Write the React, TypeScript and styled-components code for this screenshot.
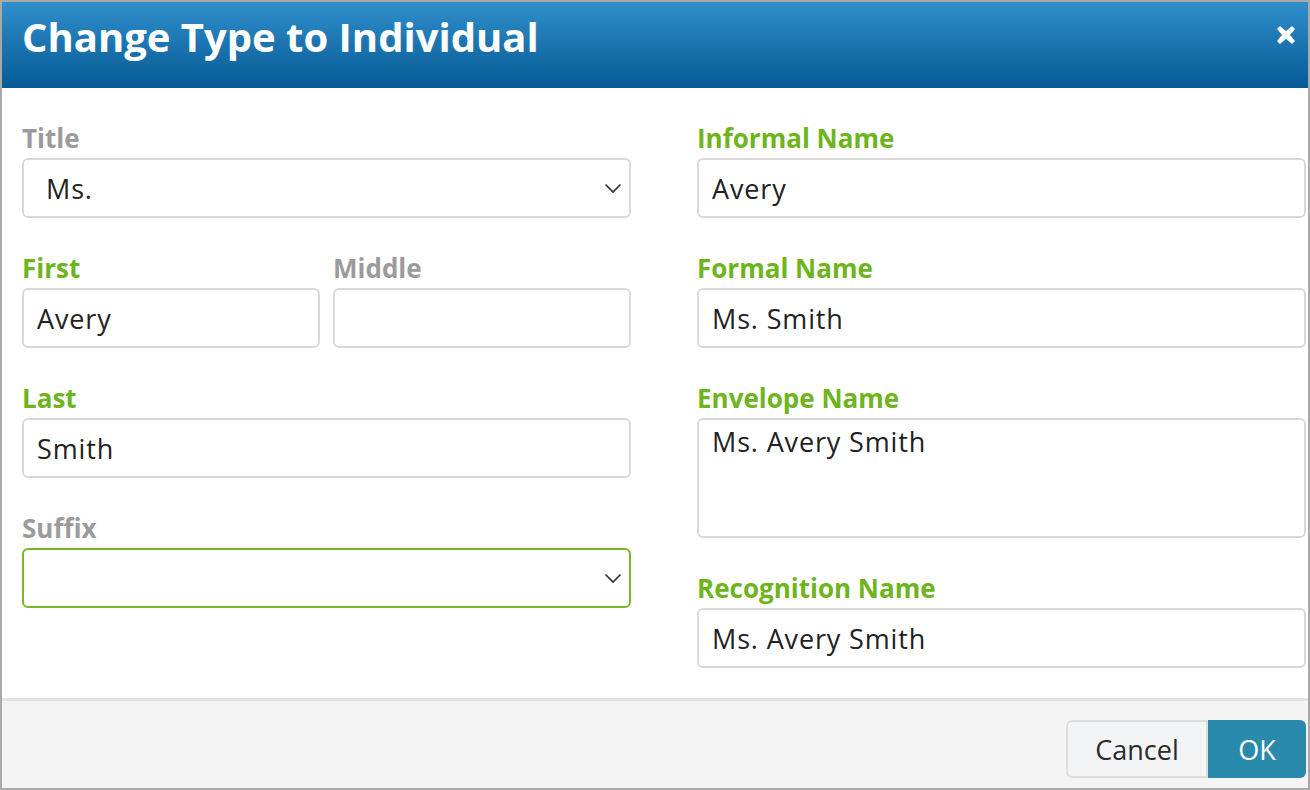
import React from "react";
import styled, { createGlobalStyle } from "styled-components";

const Global = createGlobalStyle`
  html, body { margin: 0; padding: 0; background: #ffffff; }
  body { font-family: "Open Sans", "Liberation Sans", sans-serif; }
  * { box-sizing: border-box; }
`;

const Dialog = styled.div`
  width: 1310px;
  height: 790px;
  border: 2px solid #a9a9a9;
  display: flex;
  flex-direction: column;
  background: #ffffff;
`;

const Header = styled.div`
  height: 86px;
  flex: 0 0 86px;
  padding: 8px 13px 0 20px;
  background: linear-gradient(to bottom, #2f8fcb 0%, #1b74b0 50%, #065b94 100%);
  display: flex;
  align-items: flex-start;
  justify-content: space-between;
`;

const Title = styled.h1`
  margin: 0;
  font-family: "Open Sans", "Liberation Sans", sans-serif;
  font-weight: 700;
  font-size: 40px;
  line-height: 54px;
  color: #ffffff;
  letter-spacing: 0;
`;

const Close = styled.button`
  border: 0;
  background: transparent;
  padding: 0;
  margin-top: 16px;
  width: 18px;
  height: 18px;
  display: flex;
  cursor: pointer;
`;

const Body = styled.div`
  flex: 1;
  display: grid;
  grid-template-columns: 609px 609px;
  column-gap: 66px;
  align-items: start;
  padding: 32px 2px 30px 20px;
`;

const Column = styled.div`
  display: flex;
  flex-direction: column;
  gap: 32px;
`;

const Pair = styled.div`
  display: grid;
  grid-template-columns: 1fr 1fr;
  column-gap: 13px;
`;

const Field = styled.div`
  display: flex;
  flex-direction: column;
`;

const Label = styled.label<{ $required?: boolean }>`
  display: block;
  font-family: "Open Sans", "Liberation Sans", sans-serif;
  font-weight: 700;
  font-size: 26px;
  line-height: 32px;
  padding-top: 2px;
  margin-bottom: 4px;
  color: ${(p) => (p.$required ? "#6eb41c" : "#9b9b9b")};
  white-space: nowrap;
`;

const TextInput = styled.input`
  width: 100%;
  height: 60px;
  border: 2px solid #d9d9d9;
  border-radius: 6px;
  padding: 0 13px;
  font-family: "Open Sans", "Liberation Sans", sans-serif;
  font-size: 27px;
  letter-spacing: 0.85px;
  color: #222222;
  background: #ffffff;
  outline: none;
`;

const TextArea = styled.textarea`
  width: 100%;
  height: 120px;
  border: 2px solid #d9d9d9;
  border-radius: 6px;
  padding: 3px 13px;
  font-family: "Open Sans", "Liberation Sans", sans-serif;
  font-size: 27px;
  line-height: 38px;
  letter-spacing: 0.85px;
  color: #222222;
  background: #ffffff;
  resize: none;
  outline: none;
  display: block;
`;

const SelectBox = styled.div<{ $active?: boolean }>`
  height: 60px;
  border: 2px solid ${(p) => (p.$active ? "#76b82a" : "#d9d9d9")};
  border-radius: 6px;
  padding: 0 7px 0 22px;
  display: flex;
  align-items: center;
  justify-content: space-between;
  font-family: "Open Sans", "Liberation Sans", sans-serif;
  font-size: 27px;
  letter-spacing: 0.85px;
  color: #222222;
  background: #ffffff;
`;

const Chevron = styled.svg`
  width: 18px;
  height: 11px;
  flex: 0 0 auto;
`;

const Footer = styled.div`
  flex: 0 0 90px;
  border-top: 3px solid #e3e3e3;
  background: #f4f4f4;
  padding: 19px 2px 0 0;
  display: flex;
  justify-content: flex-end;
  align-items: flex-start;
`;

const Button = styled.button<{ $primary?: boolean }>`
  height: 58px;
  padding: 0;
  font-family: "Open Sans", "Liberation Sans", sans-serif;
  font-size: 27px;
  cursor: pointer;
  width: ${(p) => (p.$primary ? "98px" : "142px")};
  border: ${(p) => (p.$primary ? "0" : "2px solid #dddddd")};
  border-radius: ${(p) => (p.$primary ? "0 6px 6px 0" : "6px 0 0 6px")};
  background: ${(p) => (p.$primary ? "#2a8aac" : "#f3f4f6")};
  color: ${(p) => (p.$primary ? "#ffffff" : "#2b2b2b")};
`;

const ChevronDown = () => (
  <Chevron viewBox="0 0 18 11">
    <polyline points="1.5,1.5 9,9 16.5,1.5" fill="none" stroke="#333" strokeWidth="1.7" />
  </Chevron>
);

const CloseIcon = () => (
  <svg width="18" height="18" viewBox="0 0 18 18">
    <path
      d="M3 1 L9 6 L15 1 L17 3 L12 9 L17 15 L15 17 L9 12 L3 17 L1 15 L6 9 L1 3 Z"
      fill="#ffffff"
      stroke="#ffffff"
      strokeWidth="1.5"
      strokeLinejoin="round"
    />
  </svg>
);

export default function App() {
  return (
    <>
      <Global />
      <Dialog>
        <Header>
          <Title>Change Type to Individual</Title>
          <Close aria-label="Close">
            <CloseIcon />
          </Close>
        </Header>
        <Body>
          <Column>
            <Field>
              <Label>Title</Label>
              <SelectBox>
                <span>Ms.</span>
                <ChevronDown />
              </SelectBox>
            </Field>
            <Pair>
              <Field>
                <Label $required>First</Label>
                <TextInput defaultValue="Avery" />
              </Field>
              <Field>
                <Label>Middle</Label>
                <TextInput defaultValue="" />
              </Field>
            </Pair>
            <Field>
              <Label $required>Last</Label>
              <TextInput defaultValue="Smith" />
            </Field>
            <Field>
              <Label>Suffix</Label>
              <SelectBox $active>
                <span></span>
                <ChevronDown />
              </SelectBox>
            </Field>
          </Column>
          <Column>
            <Field>
              <Label $required>Informal Name</Label>
              <TextInput defaultValue="Avery" />
            </Field>
            <Field>
              <Label $required>Formal Name</Label>
              <TextInput defaultValue="Ms. Smith" />
            </Field>
            <Field>
              <Label $required>Envelope Name</Label>
              <TextArea defaultValue="Ms. Avery Smith" />
            </Field>
            <Field>
              <Label $required>Recognition Name</Label>
              <TextInput defaultValue="Ms. Avery Smith" />
            </Field>
          </Column>
        </Body>
        <Footer>
          <Button>Cancel</Button>
          <Button $primary>OK</Button>
        </Footer>
      </Dialog>
    </>
  );
}
